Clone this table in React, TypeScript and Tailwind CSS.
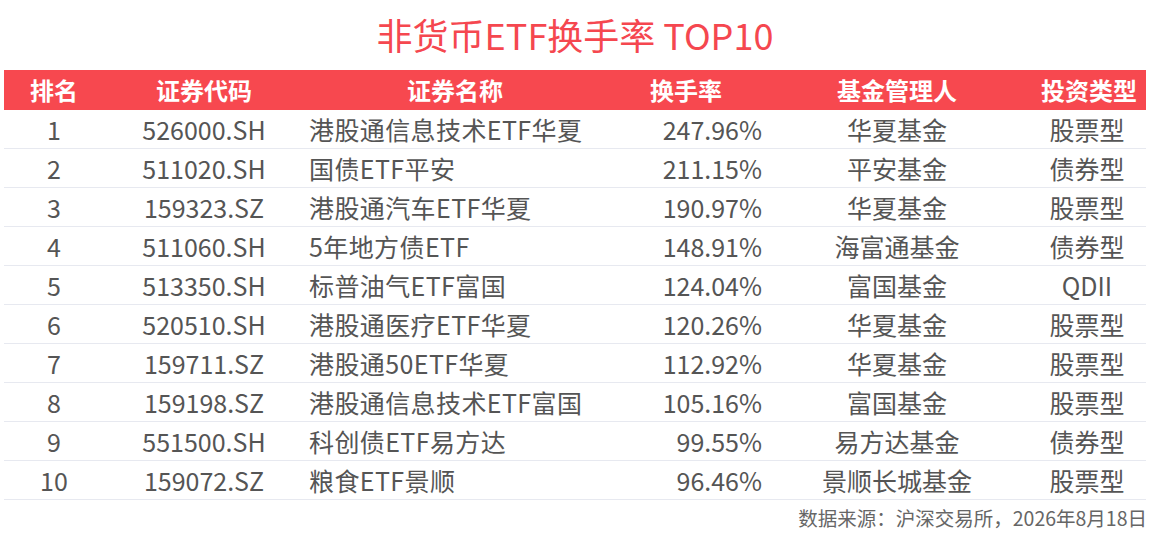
import React from 'react';

type Row = {
  rank: number;
  code: string;
  name: string;
  turnover: string;
  manager: string;
  kind: string;
};

const rows: Row[] = [
  { rank: 1, code: '526000.SH', name: '港股通信息技术ETF华夏', turnover: '247.96%', manager: '华夏基金', kind: '股票型' },
  { rank: 2, code: '511020.SH', name: '国债ETF平安', turnover: '211.15%', manager: '平安基金', kind: '债券型' },
  { rank: 3, code: '159323.SZ', name: '港股通汽车ETF华夏', turnover: '190.97%', manager: '华夏基金', kind: '股票型' },
  { rank: 4, code: '511060.SH', name: '5年地方债ETF', turnover: '148.91%', manager: '海富通基金', kind: '债券型' },
  { rank: 5, code: '513350.SH', name: '标普油气ETF富国', turnover: '124.04%', manager: '富国基金', kind: 'QDII' },
  { rank: 6, code: '520510.SH', name: '港股通医疗ETF华夏', turnover: '120.26%', manager: '华夏基金', kind: '股票型' },
  { rank: 7, code: '159711.SZ', name: '港股通50ETF华夏', turnover: '112.92%', manager: '华夏基金', kind: '股票型' },
  { rank: 8, code: '159198.SZ', name: '港股通信息技术ETF富国', turnover: '105.16%', manager: '富国基金', kind: '股票型' },
  { rank: 9, code: '551500.SH', name: '科创债ETF易方达', turnover: '99.55%', manager: '易方达基金', kind: '债券型' },
  { rank: 10, code: '159072.SZ', name: '粮食ETF景顺', turnover: '96.46%', manager: '景顺长城基金', kind: '股票型' },
];

const cols = 'grid grid-cols-[100px_200px_302px_160px_262px_118px]';

const App = () => {
  return (
    <div className="w-[1150px] h-[540px] bg-white font-['Noto_Sans_CJK_SC','Noto_Sans',sans-serif] overflow-hidden">
      <h1 className="h-[70px] flex items-center justify-center pb-[2px] text-[36px] text-[#f5474f] leading-none">
        非货币ETF换手率 TOP10
      </h1>

      <div className="mx-[4px] w-[1142px]">
        <div className={`${cols} h-[40px] items-center bg-[#f7484f] text-white font-bold text-[24px] leading-none`}>
          <div className="text-center">排名</div>
          <div className="text-center">证券代码</div>
          <div className="text-center">证券名称</div>
          <div className="text-center">换手率</div>
          <div className="text-center">基金管理人</div>
          <div className="text-center pl-1">投资类型</div>
        </div>

        {rows.map((r) => (
          <div
            key={r.rank}
            className={`${cols} h-[39px] items-center border-b border-[#e7e9f0] text-[25px] text-[#555555] leading-none`}
          >
            <div className="text-center">{r.rank}</div>
            <div className="text-center">{r.code}</div>
            <div className="pl-[5px] whitespace-nowrap tracking-[0.4px]">{r.name}</div>
            <div className="text-right pr-[4px]">{r.turnover}</div>
            <div className="text-center">{r.manager}</div>
            <div className="text-center">{r.kind}</div>
          </div>
        ))}
      </div>

      <p className="mt-[8px] pr-[3px] text-right text-[19.5px] text-[#666666] leading-none">
        数据来源：沪深交易所，2026年8月18日
      </p>
    </div>
  );
};

export default App;
